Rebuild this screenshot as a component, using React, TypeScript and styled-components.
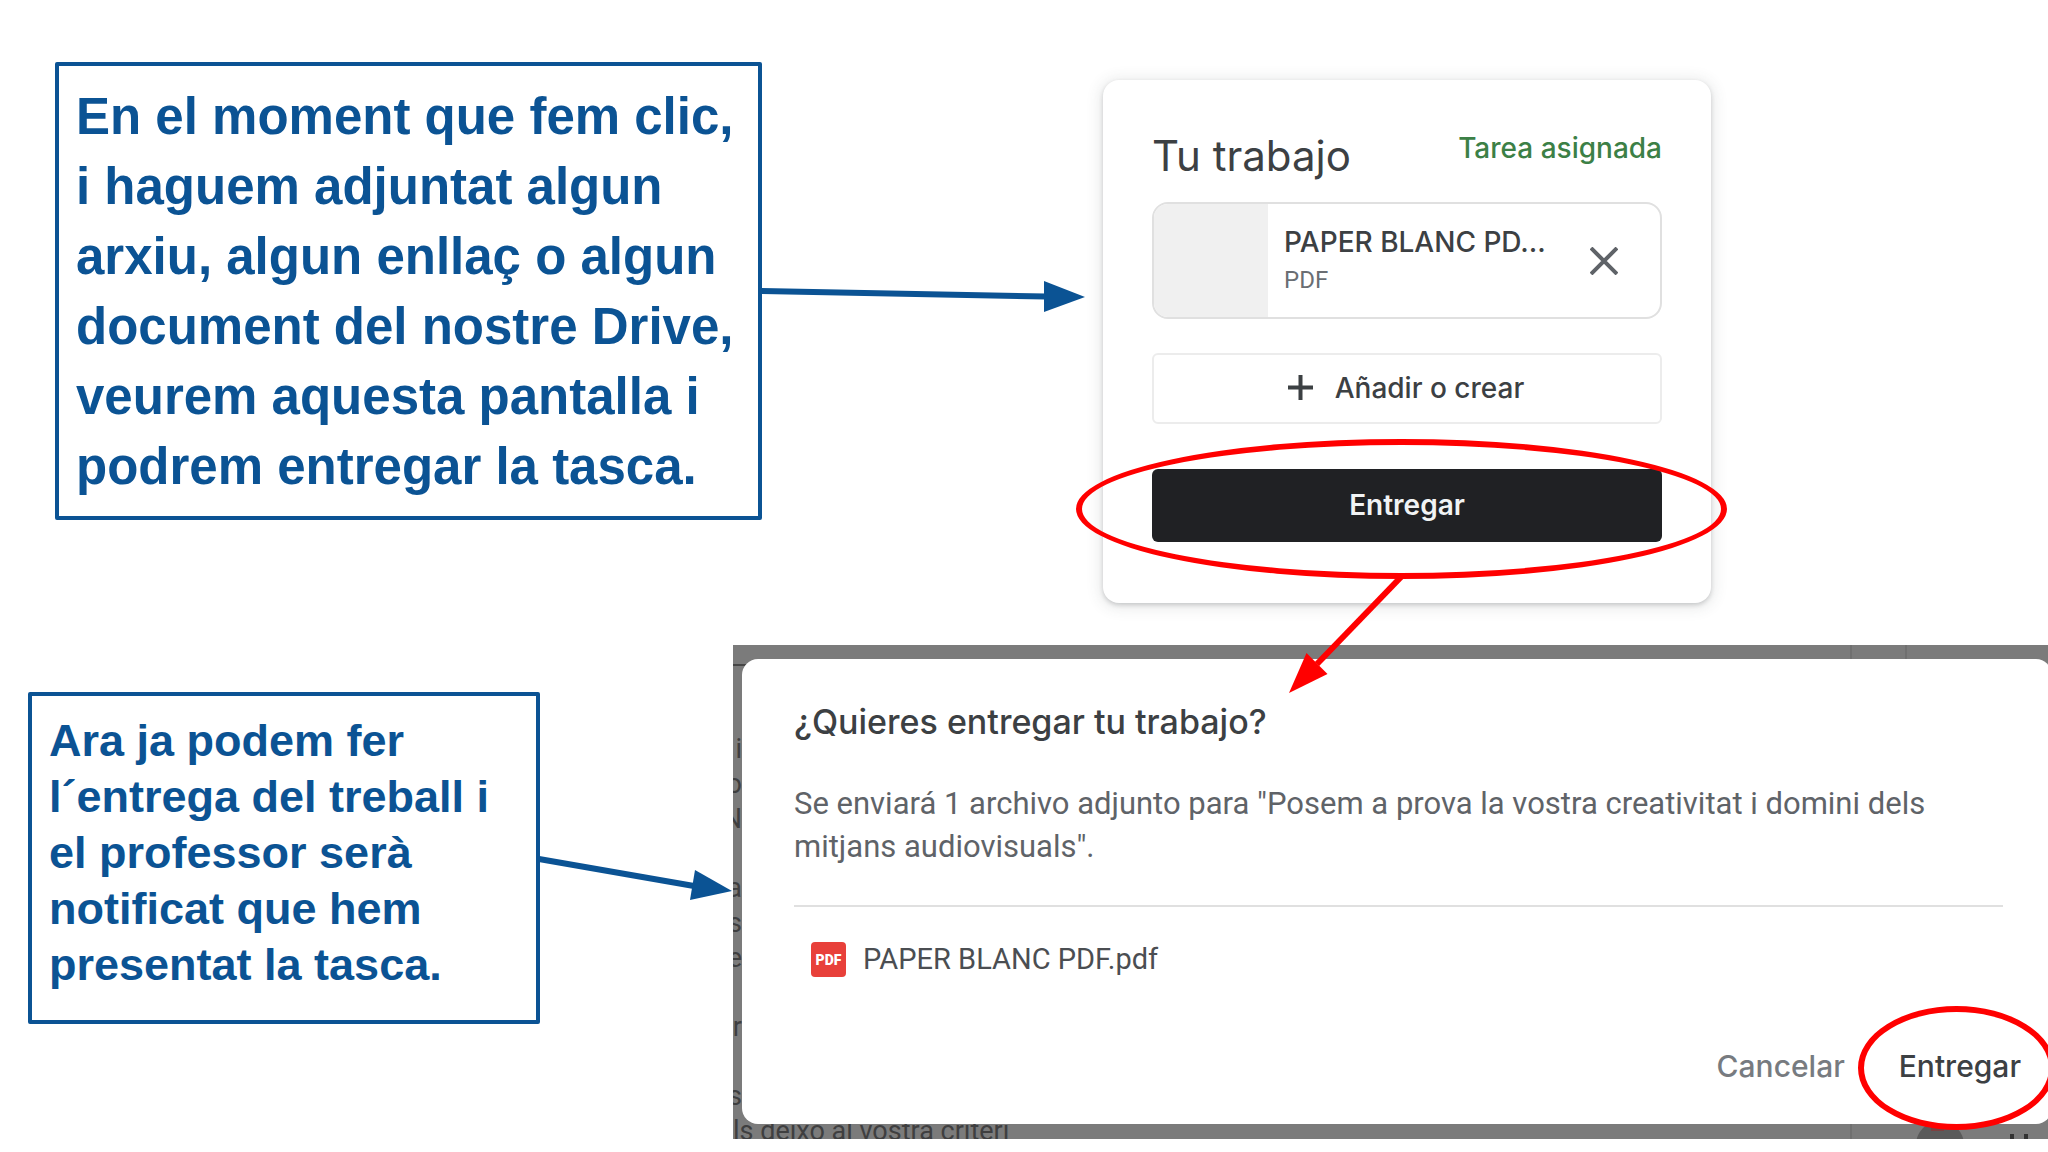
import React from 'react';
import styled, { createGlobalStyle } from 'styled-components';

const BLUE = '#0b5394';
const RED = '#ff0000';
const GOOGLE = "Inter, 'Liberation Sans', sans-serif";
const ROBOTO = "Roboto, 'Liberation Sans', sans-serif";

const GlobalStyle = createGlobalStyle`
  *, *::before, *::after { box-sizing: border-box; }
  body { margin: 0; background: #ffffff; font-family: ${ROBOTO}; }
  h2, p { margin: 0; }
  button { border: 0; padding: 0; background: none; font: inherit; cursor: pointer; }
`;

const Slide = styled.main`
  display: flex;
  flex-direction: column;
  gap: 42px;
  min-height: 100vh;
  padding-top: 62px;
  overflow: hidden;
`;

const Step = styled.section<{ $columns: string; $indent: number }>`
  display: grid;
  grid-template-columns: ${(p) => p.$columns};
  align-items: start;
  padding-left: ${(p) => p.$indent}px;
`;

const Note = styled.div<{ $size: number; $line: number; $pad: string; $drop?: number }>`
  margin-top: ${(p) => p.$drop ?? 0}px;
  padding: ${(p) => p.$pad};
  border: 4px solid ${BLUE};
  border-radius: 2px;
  color: ${BLUE};
  font: 700 ${(p) => p.$size}px / ${(p) => p.$line}px 'Liberation Sans', Arial, sans-serif;
`;

const Connector = styled.svg<{ $drop: number }>`
  display: block;
  position: relative;
  z-index: 2;
  width: 100%;
  margin-top: ${(p) => p.$drop}px;
  overflow: visible;
`;

const WorkCard = styled.article`
  margin-top: 18px;
  padding: 49px 49px 61px;
  border-radius: 16px;
  background: #ffffff;
  box-shadow: 0 2px 4px rgba(60, 64, 67, 0.22), 0 2px 14px 4px rgba(60, 64, 67, 0.1);
  font-family: ${GOOGLE};
`;

const CardHeader = styled.header`
  display: flex;
  justify-content: space-between;
  align-items: flex-start;
`;

const CardTitle = styled.h2`
  color: #3c4043;
  font-size: 42px;
  font-weight: 400;
  line-height: 54px;
`;

const Status = styled.span`
  color: #3c8046;
  font-size: 28px;
  font-weight: 500;
  line-height: 38px;
`;

const Attachment = styled.div`
  display: flex;
  align-items: center;
  height: 117px;
  margin-top: 19px;
  padding-right: 42px;
  border: 2px solid #e0e0e0;
  border-radius: 16px;
  overflow: hidden;
`;

const Thumbnail = styled.div`
  align-self: stretch;
  flex: 0 0 114px;
  background: #f0f0f0;
`;

const FileText = styled.div`
  flex: 1;
  min-width: 0;
  padding-left: 16px;
  line-height: 38px;
  white-space: nowrap;
`;

const FileName = styled.div`
  color: #3c4043;
  font-size: 28px;
  font-weight: 500;
`;

const FileType = styled.div`
  color: #6a6e73;
  font-family: ${ROBOTO};
  font-size: 24px;
`;

const IconButton = styled.button`
  display: flex;
  color: #5f6368;
`;

const AddButton = styled.button`
  display: flex;
  justify-content: center;
  align-items: center;
  gap: 22px;
  width: 100%;
  height: 71px;
  margin-top: 34px;
  padding: 0 2px 2px 0;
  border: 2px solid #ececec;
  border-radius: 6px;
  color: #3c4043;
  font-size: 28px;
  font-weight: 500;
`;

const Highlighted = styled.div<{ $top?: number }>`
  position: relative;
  margin-top: ${(p) => p.$top ?? 0}px;
`;

const Ring = styled.span<{ $inset: string }>`
  position: absolute;
  z-index: 2;
  inset: ${(p) => p.$inset};
  border: 6px solid ${RED};
  border-radius: 50%;
  pointer-events: none;
`;

const DownArrow = styled.svg`
  position: absolute;
  z-index: 3;
  top: 107px;
  right: calc(50% - 3px);
  pointer-events: none;
`;

const SubmitButton = styled.button`
  display: block;
  width: 100%;
  height: 73px;
  padding-bottom: 2px;
  border-radius: 6px;
  background: #202124;
  color: #f1f3f4;
  font-size: 28px;
  font-weight: 600;
`;

const Backdrop = styled.div`
  position: relative;
  padding: 14px 0 15px 9px;
  background: #7b7b7b;
`;

const Behind = styled.div`
  position: absolute;
  inset: 0;
  overflow: hidden;
  color: #3f3f40;
  font-size: 27px;
  line-height: 35px;
`;

const BehindRule = styled.div`
  height: 2px;
  margin-top: 19px;
  margin-bottom: 66px;
  background: #464646;
`;

const Strip = styled.div`
  display: flex;
  flex-direction: column;
  gap: 34px;
`;

const Cropped = styled.div`
  display: flex;
  flex-direction: column;
  align-items: flex-end;
  width: 9px;
`;

const BehindLine = styled.p`
  white-space: nowrap;
`;

const BehindSide = styled.svg`
  position: absolute;
  right: 0;
  bottom: 0;
`;

const Dialog = styled.section`
  position: relative;
  margin-right: -4px;
  padding: 41px 31px 37px 52px;
  border-radius: 16px;
  background: #ffffff;
`;

const DialogTitle = styled.h2`
  color: #3c4043;
  font: 500 34px / 44px ${GOOGLE};
`;

const DialogBody = styled.div`
  margin-right: 18px;
  padding: 38px 0 37px;
  border-bottom: 2px solid #e0e0e0;
  color: #5f6368;
  font-size: 31px;
  line-height: 43px;
`;

const FileRow = styled.div`
  display: flex;
  align-items: center;
  gap: 17px;
  padding: 35px 17px 68px;
  color: #4b4e52;
  font-size: 29px;
  line-height: 35px;
`;

const PdfBadge = styled.span`
  display: flex;
  justify-content: center;
  align-items: center;
  width: 35px;
  height: 35px;
  border-radius: 4px;
  background: #e8403a;
  color: #ffffff;
  font: 900 14px / 14px ${ROBOTO};
`;

const Actions = styled.footer`
  display: flex;
  justify-content: flex-end;
  gap: 54px;
  font: 500 30px / 42px ${GOOGLE};
`;

const TextButton = styled.button<{ $strong?: boolean }>`
  display: block;
  color: ${(p) => (p.$strong ? '#3c4043' : '#777b80')};
`;

export default function App() {
  return (
    <>
      <GlobalStyle />
      <Slide>
        <Step
          $columns="minmax(0, 707fr) minmax(0, 341fr) minmax(0, 608fr) minmax(0, 337fr)"
          $indent={55}
        >
          <Note $size={51} $line={70} $pad="16px 17px 14px">
            En el moment que fem clic, i haguem adjuntat algun arxiu, algun enllaç o algun
            document del nostre Drive, veurem aquesta pantalla i podrem entregar la tasca.
          </Note>
          <Connector $drop={219} viewBox="0 0 341 31" aria-hidden="true">
            <path d="M-1 10L284 15.500" stroke={BLUE} strokeWidth="6" />
            <path d="M282 0V31L323 16Z" fill={BLUE} />
          </Connector>
          <WorkCard>
            <CardHeader>
              <CardTitle>Tu trabajo</CardTitle>
              <Status>Tarea asignada</Status>
            </CardHeader>
            <Attachment>
              <Thumbnail />
              <FileText>
                <FileName>PAPER BLANC PD...</FileName>
                <FileType>PDF</FileType>
              </FileText>
              <IconButton aria-label="Quitar">
                <svg width="28" height="28" viewBox="0 0 28 28">
                  <path d="M1 1L27 27M27 1L1 27" stroke="currentColor" strokeWidth="4" />
                </svg>
              </IconButton>
            </Attachment>
            <AddButton>
              <svg width="25" height="25" viewBox="0 0 25 25" aria-hidden="true">
                <path d="M12.500 0V25M0 12.500H25" stroke="currentColor" strokeWidth="4" />
              </svg>
              Añadir o crear
            </AddButton>
            <Highlighted $top={45}>
              <SubmitButton>Entregar</SubmitButton>
              <Ring $inset="-30px -65px -37px -76px" />
              <DownArrow width="130" height="120" viewBox="0 0 130 120" aria-hidden="true">
                <path d="M122 0L37 88" stroke={RED} strokeWidth="6" />
                <path d="M9 117L26.500 77L47.500 98Z" fill={RED} />
              </DownArrow>
            </Highlighted>
          </WorkCard>
        </Step>

        <Step $columns="minmax(0, 512fr) minmax(0, 193fr) minmax(0, 1315fr)" $indent={28}>
          <Note $size={45} $line={56} $pad="17px 17px 27px" $drop={47}>
            Ara ja podem fer
            <br />
            l´entrega del treball i el professor serà notificat que hem presentat la tasca.
          </Note>
          <Connector $drop={210} viewBox="0 0 193 50" aria-hidden="true">
            <path d="M-1 4L154 31" stroke={BLUE} strokeWidth="6" />
            <path d="M155 15L150 45L192 36Z" fill={BLUE} />
          </Connector>
          <Backdrop>
            <Behind>
              <BehindRule />
              <Strip>
                <Cropped>
                  <BehindLine>i</BehindLine>
                  <BehindLine>o</BehindLine>
                  <BehindLine>N</BehindLine>
                </Cropped>
                <Cropped>
                  <BehindLine>a</BehindLine>
                  <BehindLine>s</BehindLine>
                  <BehindLine>e</BehindLine>
                </Cropped>
                <Cropped>
                  <BehindLine>r</BehindLine>
                </Cropped>
                <div>
                  <Cropped>
                    <BehindLine>s</BehindLine>
                  </Cropped>
                  <BehindLine>ls deixo al vostra criteri</BehindLine>
                </div>
              </Strip>
              <BehindSide width="200" height="494" viewBox="0 0 200 494" aria-hidden="true">
                <path d="M3 0V494M58 0V14" stroke="#707070" strokeWidth="2" />
                <circle cx="92" cy="500" r="24" fill="#5a5a5a" />
                <rect x="83" y="479" width="13" height="7" fill="#7c4040" />
                <path d="M164 489V494M178 489V494" stroke="#333333" strokeWidth="4" />
              </BehindSide>
            </Behind>
            <Dialog role="dialog" aria-labelledby="dialog-title">
              <DialogTitle id="dialog-title">¿Quieres entregar tu trabajo?</DialogTitle>
              <DialogBody>
                <p>
                  Se enviará 1 archivo adjunto para "Posem a prova la vostra creativitat i domini
                  dels mitjans audiovisuals".
                </p>
              </DialogBody>
              <FileRow>
                <PdfBadge>PDF</PdfBadge>
                PAPER BLANC PDF.pdf
              </FileRow>
              <Actions>
                <TextButton>Cancelar</TextButton>
                <Highlighted>
                  <TextButton $strong>Entregar</TextButton>
                  <Ring $inset="-39px -34px -43px -41px" />
                </Highlighted>
              </Actions>
            </Dialog>
          </Backdrop>
        </Step>
      </Slide>
    </>
  );
}
